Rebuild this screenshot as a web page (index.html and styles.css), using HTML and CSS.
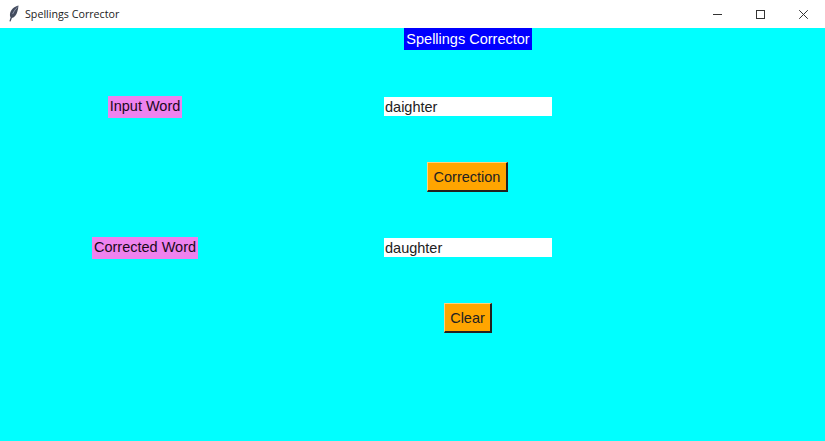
FILE: index.html
```html
<!DOCTYPE html>
<html lang="en">
<head>
    <meta charset="UTF-8">
    <title>Spellings Corrector</title>
    <link rel="stylesheet" href="styles.css">
</head>
<body>
    <section id="wrap">
        <header class="titleBar">
            <svg class="feather" width="12" height="17" viewBox="0 0 12 18" preserveAspectRatio="none">
                <path d="M10.5 0.5C6 1.8 2.6 5 2 9.5C1.8 11 2.1 12.3 2.6 13L1.4 17.3L2.6 17.6L3.9 13.8C6.6 13.2 8.5 10.5 9.3 7.2C9.9 5 10.4 2.8 10.5 0.5Z" fill="#434c5e"/>
                <path d="M9.6 2.2C7.6 4 6 6.5 4.6 9.6" stroke="#a3adc2" stroke-width="0.8" fill="none"/>
            </svg>
            <span class="titleText">Spellings Corrector</span>
            <div class="winBtns">
                <div class="winBtn">
                    <svg width="9" height="9" viewBox="0 0 9 9"><path d="M0 4.5H9" stroke="#333" stroke-width="1"/></svg>
                </div>
                <div class="winBtn">
                    <svg width="9" height="9" viewBox="0 0 9 9"><rect x="0.5" y="0.5" width="8" height="8" fill="none" stroke="#333" stroke-width="1"/></svg>
                </div>
                <div class="winBtn">
                    <svg width="9" height="9" viewBox="0 0 9 9"><path d="M0.2 0.2L8.8 8.8M8.8 0.2L0.2 8.8" stroke="#333" stroke-width="1"/></svg>
                </div>
            </div>
        </header>
        <main class="form">
            <div class="heading">Spellings Corrector</div>
            <div class="tag">Input Word</div>
            <input class="field" type="text" value="daighter">
            <button class="btn btnCorrection">Correction</button>
            <div class="tag">Corrected Word</div>
            <input class="field" type="text" value="daughter">
            <button class="btn btnClear">Clear</button>
        </main>
    </section>
</body>
</html>
```

FILE: styles.css
```css
html,body{height: 100%;overflow: hidden;}
html,body{margin: 0;padding: 0;}
body{font: 14.5px "Liberation Sans", Arial, sans-serif;color: #000;}

#wrap{
    display: flex;
    flex-direction: column;
    height: 100%;
}

.titleBar{
    display: flex;
    align-items: center;
    height: 28px;
    flex: none;
    background: #fff;
}
.feather{
    margin-left: 8px;
    margin-top: -1px;
}
.titleText{
    margin-left: 5px;
    font: 10.7px "Open Sans", "Liberation Sans", sans-serif;
    color: #222;
}
.winBtns{
    display: flex;
    margin-left: auto;
}
.winBtn{
    width: 43px;
    height: 28px;
    display: flex;
    align-items: center;
    justify-content: center;
}

.form{
    flex: 1;
    background: #00ffff;
    display: grid;
    grid-template-columns: 292px 352px;
    grid-template-rows: 43px 71px 70px 71px 70px;
    justify-items: center;
    align-items: center;
}

.heading{
    grid-column: 2;
    align-self: start;
    background: #0000ff;
    color: #fff;
    height: 22px;
    line-height: 22px;
    padding: 0 2px;
}

.tag{
    grid-column: 1;
    background: #ee82ee;
    height: 22px;
    line-height: 21px;
    padding: 0 2px;
    margin-right: 2px;
    color: #1a0a1a;
}

.field{
    grid-column: 2;
    box-sizing: border-box;
    width: 168px;
    height: 19px;
    margin: 0;
    padding: 0 1px;
    border: 0;
    outline: 0;
    background: #fff;
    font: 14.5px "Liberation Sans", Arial, sans-serif;
    color: #222;
}

.btn{
    grid-column: 2;
    box-sizing: border-box;
    height: 30px;
    margin: 0;
    padding: 1px 0 0;
    background: #ffa500;
    font: 14.5px "Liberation Sans", Arial, sans-serif;
    color: #222;
    border: 1px solid;
    border-color: #ffd27f #222 #222 #ffd27f;
    border-width: 1px 2px 2px 1px;
}
.btnCorrection{width: 81px;margin-right: 1px;}
.btnClear{width: 48px;}
```
